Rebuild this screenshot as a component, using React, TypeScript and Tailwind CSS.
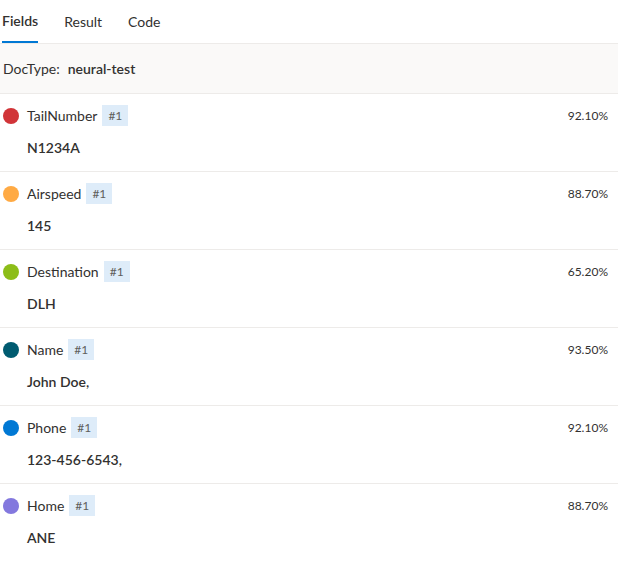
import React from "react";

interface Field {
  name: string;
  value: string;
  confidence: string;
  color: string;
}

const fields: Field[] = [
  { name: "TailNumber", value: "N1234A", confidence: "92.10%", color: "bg-[#d13438]" },
  { name: "Airspeed", value: "145", confidence: "88.70%", color: "bg-[#ffaa44]" },
  { name: "Destination", value: "DLH", confidence: "65.20%", color: "bg-[#8cbd18]" },
  { name: "Name", value: "John Doe,", confidence: "93.50%", color: "bg-[#005b70]" },
  { name: "Phone", value: "123-456-6543,", confidence: "92.10%", color: "bg-[#0078d4]" },
  { name: "Home", value: "ANE", confidence: "88.70%", color: "bg-[#8378de]" },
];

export default function App() {
  return (
    <div className="min-h-[579px] w-[638px] bg-white font-['Segoe_UI','Lato',sans-serif] text-[#323130]">
      <div className="w-[618px]">
        <div className="flex h-[44px] gap-[26px] border-b border-[#edebe9] pl-[2px] text-[14px]">
          <div className="flex h-[43px] items-center border-b-2 border-[#0078d4] font-semibold">
            Fields
          </div>
          <div className="flex h-[43px] items-center">Result</div>
          <div className="flex h-[43px] items-center">Code</div>
        </div>
        <div className="flex h-[50px] items-center gap-2 border-b border-[#edebe9] bg-[#faf9f8] pl-[3px] text-[14px]">
          <span>DocType:</span>
          <span className="font-semibold">neural-test</span>
        </div>
        {fields.map((f, i) => (
          <div
            key={f.name}
            className={`h-[78px] pt-[11px] ${i < fields.length - 1 ? "border-b border-[#edebe9]" : ""}`}
          >
            <div className="flex h-[21px] items-center pr-[10px]">
              <span className={`ml-[3px] h-4 w-4 rounded-full ${f.color}`} />
              <span className="ml-2 text-[14px]">{f.name}</span>
              <span className="ml-[5px] flex h-[21px] items-center bg-[#deecf9] px-[6px] text-[12px] text-[#605e5c]">
                #1
              </span>
              <span className="ml-auto text-[12px]">{f.confidence}</span>
            </div>
            <div className="ml-[27px] mt-[12px] text-[14px] font-semibold leading-[20px]">
              {f.value}
            </div>
          </div>
        ))}
      </div>
    </div>
  );
}
